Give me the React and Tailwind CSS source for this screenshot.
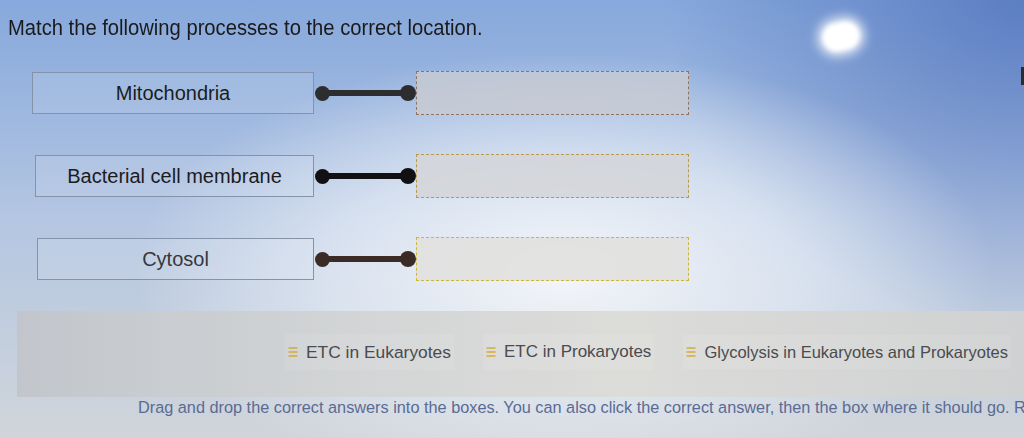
import React from "react";

const rows = [
  {
    label: "Mitochondria",
    offset: "ml-[32px]",
    labelColor: "text-[#1c1c1e]",
    knob: "bg-[#2d2d30]",
    dash: "border-[#8f7464]",
    fill: "bg-[#c7cad2]/85",
  },
  {
    label: "Bacterial cell membrane",
    offset: "ml-[35px]",
    labelColor: "text-[#1c1c1e]",
    knob: "bg-[#111113]",
    dash: "border-[#b89a48]",
    fill: "bg-[#d4d5d8]/85",
  },
  {
    label: "Cytosol",
    offset: "ml-[37px]",
    labelColor: "text-[#36383c]",
    knob: "bg-[#3a2b27]",
    dash: "border-[#cdb63c]",
    fill: "bg-[#e1e1dd]/85",
  },
];

const answers = [
  { text: "ETC in Eukaryotes", size: "text-[17.4px]" },
  { text: "ETC in Prokaryotes", size: "text-[17px]" },
  { text: "Glycolysis in Eukaryotes and Prokaryotes", size: "text-[16.5px]" },
];

function Grip() {
  return (
    <svg width="10" height="12" viewBox="0 0 10 12" className="shrink-0">
      <g stroke="#d3aa2c" strokeWidth="1.4">
        <line x1="0.5" y1="2" x2="9.5" y2="2" />
        <line x1="0.5" y1="6" x2="9.5" y2="6" />
        <line x1="0.5" y1="10" x2="9.5" y2="10" />
      </g>
    </svg>
  );
}

function Connector({ knob }) {
  return (
    <div className="flex items-center w-[101px] shrink-0">
      <div className={`w-[15px] h-[15px] rounded-full ${knob} shrink-0`} />
      <div className={`h-[6px] flex-1 -mx-[2px] ${knob}`} />
      <div className={`w-[16px] h-[16px] rounded-full ${knob} shrink-0`} />
    </div>
  );
}

export default function App() {
  return (
    <div
      className="relative w-[1024px] h-[438px] overflow-hidden font-['Liberation_Sans',Arial,sans-serif] bg-[radial-gradient(ellipse_42%_50%_at_55%_62%,rgba(246,248,250,0.95),rgba(236,241,248,0.6)_55%,rgba(236,241,248,0)_100%),radial-gradient(ellipse_35%_75%_at_100%_0%,rgba(78,112,186,0.75),rgba(78,112,186,0)_100%),linear-gradient(to_bottom,#86a8dc,#b4c6e2_50%,#d0d5da)]"
    >
      <h1 className="pl-[8px] pt-[13px] text-[20.2px] leading-[24px] text-[#1a1a1c] scale-y-110 origin-top-left">
        Match the following processes to the correct location.
      </h1>

      <div className="mt-[34px] flex flex-col gap-[39px]">
        {rows.map((r) => (
          <div key={r.label} className="flex items-center">
            <div
              className={`${r.offset} flex-1 max-w-[283px] h-[42px] border border-[#8593aa] bg-white/10 flex items-center justify-center text-[20px] ${r.labelColor}`}
            >
              {r.label}
            </div>
            <div className="ml-auto" />
            <div className="flex items-center ml-[1px]">
              <Connector knob={r.knob} />
              <div
                className={`w-[273px] h-[44px] border border-dashed ${r.dash} ${r.fill}`}
              />
            </div>
            <div className="w-[335px] shrink-0" />
          </div>
        ))}
      </div>

      <div className="mt-[30px] ml-[17px] h-[86px] bg-[linear-gradient(to_right,#c2c6cc,#d3d5d6_35%,#dcdcd9_60%,#cfd1d2)] flex items-center">
        <div className="flex items-center gap-[29px] pl-[268px] text-[#4a4b4e] whitespace-nowrap -mt-[4px]">
          {answers.map((a) => (
            <div
              key={a.text}
              className={`flex items-center gap-[8px] px-[3px] py-[5px] bg-white/[0.07] ${a.size}`}
            >
              <Grip />
              <span>{a.text}</span>
            </div>
          ))}
        </div>
      </div>

      <p className="mt-[0px] pl-[138px] text-[16.3px] leading-[20px] text-[#5b6b93] whitespace-nowrap">
        Drag and drop the correct answers into the boxes. You can also click the
        correct answer, then the box where it should go. R
      </p>

      <div className="absolute left-[822px] top-[22px] w-[38px] h-[29px] rounded-full bg-white -rotate-12 blur-[2px] shadow-[0_0_10px_5px_rgba(255,255,255,0.75)]" />
      <div className="absolute right-0 top-[67px] w-[3px] h-[18px] bg-[#2b2b30]" />
    </div>
  );
}
